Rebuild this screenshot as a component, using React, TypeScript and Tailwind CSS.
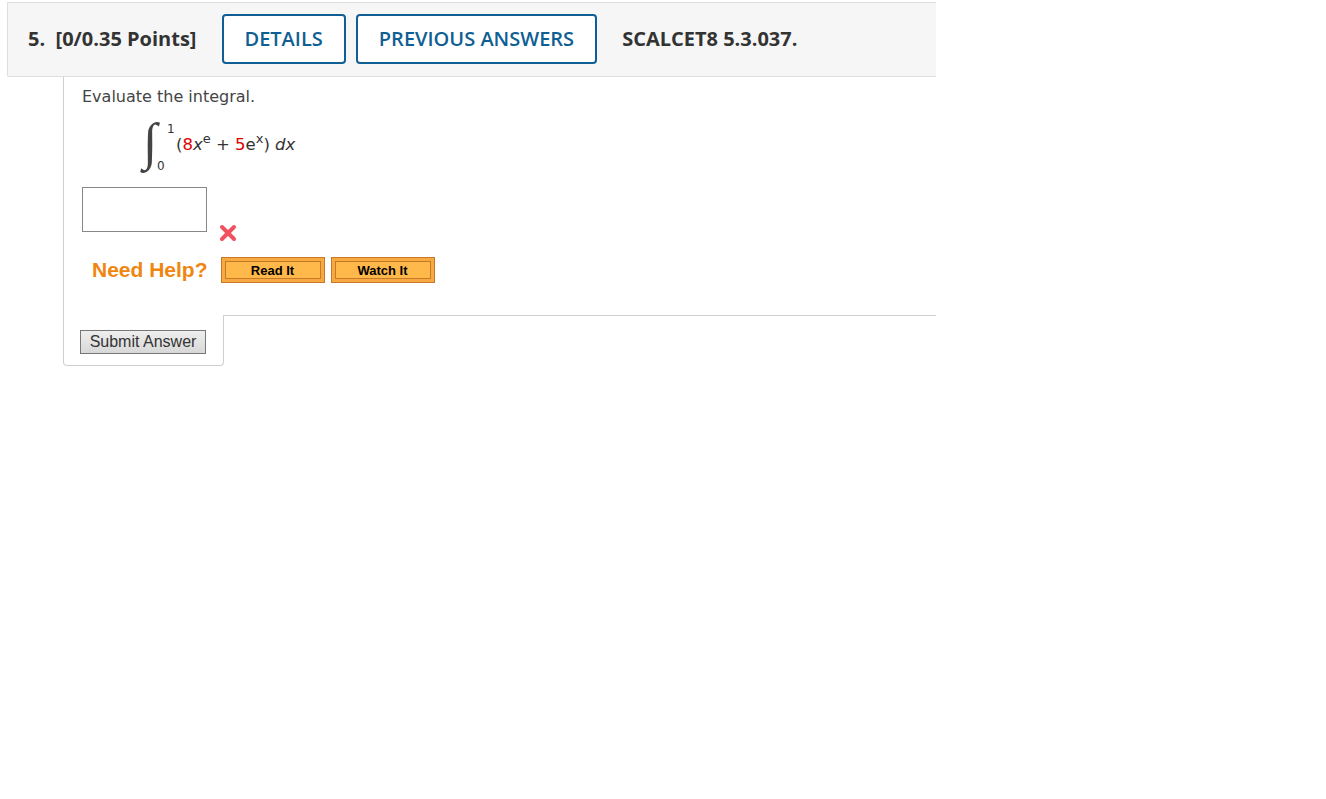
import React from 'react';

const sans = { fontFamily: '"Open Sans", "Liberation Sans", sans-serif' };

function HeaderButton({ label }: { label: string }) {
  return (
    <button className="flex h-[50px] items-center rounded-[4px] border-2 border-[#0f5f94] bg-white px-[21px] text-[20px] font-semibold text-[#0f5f94]">
      {label}
    </button>
  );
}

function HelpButton({ label }: { label: string }) {
  return (
    <button className="flex h-[26px] w-full items-stretch border border-[#c9782a] bg-[#f5a93e] p-[3px]">
      <span className="flex flex-1 items-center justify-center border border-[#c9782a] bg-[#ffb94a] pt-[1px] font-['Liberation_Sans',sans-serif] text-[13px] font-bold leading-none text-black">
        {label}
      </span>
    </button>
  );
}

export default function App() {
  return (
    <div className="min-h-screen bg-white pt-[2px]">
      <div
        className="ml-[7px] flex h-[75px] w-[929px] items-center rounded-bl-[2px] border-y border-l border-[#dedede] bg-[#f6f6f6] pb-[2px] pl-[20px]"
        style={sans}
      >
        <span className="text-[20px] font-bold text-[#333]">5.&nbsp; [0/0.35 Points]</span>
        <div className="ml-[25px] flex gap-[10px]">
          <HeaderButton label="DETAILS" />
          <HeaderButton label="PREVIOUS ANSWERS" />
        </div>
        <span className="ml-[25px] text-[20px] font-bold text-[#333]">SCALCET8 5.3.037.</span>
      </div>

      <div className="ml-[63px] w-[873px] font-['DejaVu_Sans',sans-serif] text-[#444]">
        <div className="border-l border-[#cfcfcf] pl-[18px] pt-[9px] pb-[29px]">
          <p className="text-[16px] leading-[22px]">Evaluate the integral.</p>
          <div className="ml-[60px] mt-[12px] flex h-[54px] items-center">
            <div className="relative h-[54px] w-[34px]">
              <span className="absolute left-[1px] top-[-4px] font-['Liberation_Serif',serif] text-[52px] font-light leading-none text-[#444]">
                ∫
              </span>
              <span className="absolute left-[25px] top-[0px] text-[12px] text-[#333]">1</span>
              <span className="absolute left-[15px] top-[37px] text-[12px] text-[#333]">0</span>
            </div>
            <span className="mb-[4px] text-[16.5px] text-[#333]">
              (<span className="text-[#e00000]">8</span>
              <i>x</i>
              <sup className="text-[13px]">e</sup> + <span className="text-[#e00000]">5</span>e
              <sup className="text-[13px]">x</sup>) <i>dx</i>
            </span>
          </div>
          <div className="mt-[13px] flex items-start">
            <div className="h-[45px] w-[125px] border border-[#888] bg-white" />
            <svg className="ml-[12px] mt-[37px]" width="18" height="18" viewBox="0 0 18 18">
              <path d="M3 3 L15 15 M15 3 L3 15" stroke="#f2505e" strokeWidth="4" strokeLinecap="round" />
            </svg>
          </div>
          <div className="mt-[12px] flex items-center pl-[10px]">
            <span className="font-['Liberation_Sans',sans-serif] text-[21px] font-bold text-[#f0860f]">Need Help?</span>
            <div className="ml-[13px] flex gap-[6px]">
              <div className="w-[104px]">
                <HelpButton label="Read It" />
              </div>
              <div className="w-[104px]">
                <HelpButton label="Watch It" />
              </div>
            </div>
          </div>
        </div>
        <div className="flex">
          <div className="h-[51px] w-[161px] rounded-b-[4px] border-x border-b border-[#cfcfcf] pl-[16px] pt-[15px]">
            <button className="h-[24px] w-[126px] border border-[#777] bg-gradient-to-b from-[#eee] to-[#d8d8d8] font-['Liberation_Sans',sans-serif] text-[16px] leading-none text-[#333]">
              Submit Answer
            </button>
          </div>
          <div className="flex-1 border-t border-[#cfcfcf]" />
        </div>
      </div>
    </div>
  );
}
